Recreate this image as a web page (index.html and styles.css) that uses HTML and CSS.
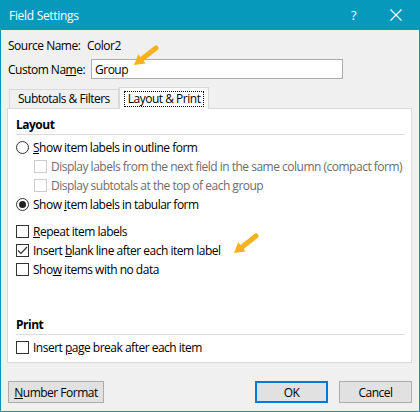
FILE: index.html
```html
<!DOCTYPE html>
<html lang="en">
<head>
    <meta charset="UTF-8">
    <title>Field Settings</title>
    <link rel="stylesheet" href="styles.css">
</head>
<body>
    <div class="window">
        <div class="titlebar">
            <span class="title">Field Settings</span>
            <span class="help">?</span>
            <svg class="close" width="12" height="12" viewBox="0 0 12 12">
                <path d="M0.5 0.5 L11.5 11.5 M11.5 0.5 L0.5 11.5" stroke="#fff" stroke-width="1.2" fill="none"/>
            </svg>
        </div>

        <div class="content">
            <div class="field-row source-row">
                <span class="field-label">Source Name:</span>
                <span>Color2</span>
            </div>
            <div class="field-row custom-row">
                <label class="field-label" for="customName">Custom Na<u>m</u>e:</label>
                <input type="text" id="customName" value="Group">
            </div>

            <div class="tabs">
                <div class="tab">Subtotals &amp; Filters</div>
                <div class="tab active"><span class="focus">Layout &amp; Print</span></div>
            </div>

            <div class="panel">
                <div class="group-title">Layout</div>
                <div class="sep"></div>

                <div class="opt"><span class="radio"></span><span><u>S</u>how item labels in outline form</span></div>
                <div class="opt sub disabled"><span class="check"></span><span>Display labels from the next field in the same column (compact form)</span></div>
                <div class="opt sub disabled"><span class="check"></span><span>Display subtotals at the top of each group</span></div>
                <div class="opt"><span class="radio on"></span><span>Show <u>i</u>tem labels in tabular form</span></div>

                <div class="opt spaced"><span class="check"></span><span><u>R</u>epeat item labels</span></div>
                <div class="opt">
                    <span class="check">
                        <svg width="11" height="11" viewBox="0 0 11 11"><path d="M1 5.5 L4 8.5 L10 2" stroke="#333" stroke-width="1.2" fill="none"/></svg>
                    </span>
                    <span>Insert <u>b</u>lank line after each item label</span>
                </div>
                <div class="opt"><span class="check"></span><span>Sho<u>w</u> items with no data</span></div>

                <div class="group-title print-title">Print</div>
                <div class="sep"></div>
                <div class="opt"><span class="check"></span><span>Insert <u>p</u>age break after each item</span></div>
            </div>

            <div class="buttons">
                <button class="btn wide"><u>N</u>umber Format</button>
                <span class="spacer"></span>
                <button class="btn default">OK</button>
                <button class="btn">Cancel</button>
            </div>
        </div>

        <!-- callout arrows -->
        <svg class="arrow arrow-name" width="30" height="25" viewBox="0 0 30 25">
            <path d="M25 3 L11 14" stroke="#f5b21e" stroke-width="5" stroke-linecap="round"/>
            <polygon points="3,20 14.6,18.6 7.2,9.2" fill="#f5b21e"/>
        </svg>
        <svg class="arrow arrow-blank" width="30" height="25" viewBox="0 0 30 25">
            <path d="M25 3 L11 14" stroke="#f5b21e" stroke-width="5" stroke-linecap="round"/>
            <polygon points="3,20 14.6,18.6 7.2,9.2" fill="#f5b21e"/>
        </svg>
    </div>
</body>
</html>
```

FILE: styles.css
```css
body {
    margin: 0;
    font-family: "Open Sans", "Noto Sans", Arial, sans-serif;
    font-size: 12px;
    letter-spacing: -0.5px;
    color: #000;
}
.window {
    position: relative;
    width: 420px;
    height: 412px;
    box-sizing: border-box;
    background-color: #f0f0f0;
    border: 1px solid #0799bb;
    border-top: none;
}
.titlebar {
    height: 30px;
    margin: 0 -1px;
    background-color: #0799bb;
    color: #fff;
    display: flex;
    align-items: center;
    padding-left: 9px;
}
.title {
    font-size: 12px;
    letter-spacing: -0.3px;
    flex: 1;
}
.help {
    font-size: 13px;
    margin-right: 34px;
}
.close {
    margin-right: 18px;
}
.content {
    padding: 0 7px 0 6px;
}
.field-row {
    display: flex;
    align-items: center;
    white-space: nowrap;
}
.source-row {
    height: 18px;
    margin-top: 6px;
}
.custom-row {
    height: 20px;
    margin-top: 5px;
}
.field-label {
    width: 79px;
    flex: none;
    margin-left: 1px;
}
input {
    width: 252px;
    height: 20px;
    box-sizing: border-box;
    border: 1px solid #acacac;
    background: #fff;
    font-family: inherit;
    font-size: 12px;
    letter-spacing: -0.5px;
    padding: 0 3px;
    margin-left: 4px;
    outline: none;
}
.tabs {
    display: flex;
    align-items: flex-end;
    height: 21px;
    margin-top: 8px;
    padding-left: 2px;
    position: relative;
    z-index: 1;
}
.tab {
    height: 19px;
    line-height: 18px;
    box-sizing: border-box;
    padding: 0 8px;
    border: 1px solid #d9d9d9;
    border-bottom: none;
    background: #f0f0f0;
}
.tab.active {
    height: 22px;
    margin-bottom: -1px;
    background: #fff;
    padding: 3px 4px 0;
}
.focus {
    display: block;
    border: 1px dotted #000;
    line-height: 14px;
    padding: 0 3px;
}
.panel {
    background: #fff;
    border: 1px solid #d9d9d9;
    padding: 7px 6px 5px 8px;
}
.group-title {
    font-weight: bold;
    line-height: 18px;
}
.print-title {
    margin-top: 37px;
}
.sep {
    height: 1px;
    background: #dcdcdc;
    margin: 0 0 3px 0;
}
.opt {
    display: flex;
    align-items: center;
    height: 19px;
    white-space: nowrap;
}
.opt.sub {
    padding-left: 18px;
}
.opt.spaced {
    margin-top: 8px;
}
.opt.disabled {
    color: #6d6d6d;
}
.radio, .check {
    width: 13px;
    height: 13px;
    box-sizing: border-box;
    border: 1px solid #333;
    background: #fff;
    margin-right: 4px;
    flex: none;
    display: flex;
    align-items: center;
    justify-content: center;
}
.radio {
    border-radius: 50%;
}
.radio.on::after {
    content: "";
    width: 7px;
    height: 7px;
    border-radius: 50%;
    background: #222;
}
.disabled .check {
    border-color: #cccccc;
}
.buttons {
    display: flex;
    margin-top: 18px;
}
.spacer {
    flex: 1;
}
.btn {
    height: 22px;
    width: 73px;
    box-sizing: border-box;
    border: 1px solid #adadad;
    background: #e1e1e1;
    font-family: inherit;
    font-size: 12px;
    letter-spacing: -0.5px;
    padding: 0;
    margin-left: 11px;
}
.btn.wide {
    width: 96px;
    margin-left: 1px;
}
.btn.default {
    border: 2px solid #0078d7;
}
.arrow {
    position: absolute;
}
.arrow-name {
    left: 130px;
    top: 45px;
}
.arrow-blank {
    left: 230px;
    top: 233px;
}
```
